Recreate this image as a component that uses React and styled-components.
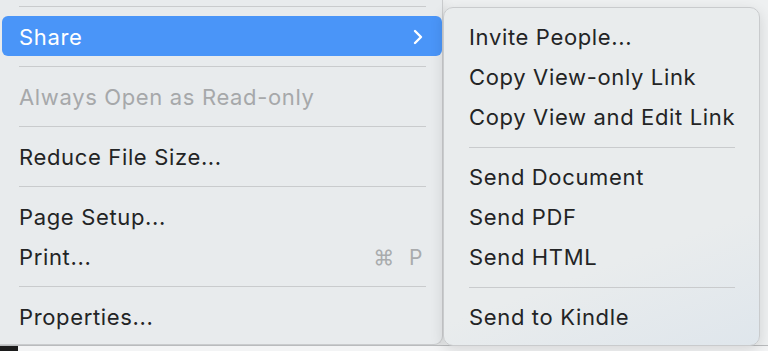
import styled, { createGlobalStyle } from 'styled-components'

const GlobalStyle = createGlobalStyle`
    html, body {
        margin: 0;
        padding: 0;
        background: #eef0f1;
        overflow: hidden;
    }
    body {
        font-family: Inter, "Noto Sans", "Liberation Sans", sans-serif;
        -webkit-font-smoothing: antialiased;
    }
`

const Screen = styled.div`
    width: 768px;
    height: 351px;
    display: flex;
    flex-direction: column;
    overflow: hidden;
`

const MenuRow = styled.div`
    display: flex;
    align-items: flex-start;
    height: 345px;
`

const Panel = styled.div`
    box-sizing: border-box;
    display: flex;
    flex-direction: column;
    background: #e8ebed;
    border: 1px solid #c9cbcd;
    box-shadow: 0 4px 14px rgba(0, 0, 0, 0.12);
`

const MainMenu = styled(Panel)`
    width: 444px;
    height: 345px;
    margin-left: -1px;
    border-top: none;
    border-left: none;
    border-radius: 0 0 9px 0;
    padding: 0 0 0 3px;
`

const SubMenu = styled(Panel)`
    width: 317px;
    height: 339px;
    margin-top: 7px;
    border-radius: 10px;
    padding-top: 9px;
    background: linear-gradient(160deg, #e9eced 0%, #e9eced 70%, #dfe6ec 100%);
    z-index: 1;
`

const Item = styled.div`
    box-sizing: border-box;
    height: 40px;
    display: flex;
    align-items: center;
    justify-content: space-between;
    padding: ${(p) => (p.$sub ? '0' : '2px')} ${(p) => (p.$sub ? '20px' : '19px')} 0
        ${(p) => (p.$sub ? '25px' : '17px')};
    font-size: 22px;
    letter-spacing: 0.65px;
    color: ${(p) => (p.$disabled ? '#a6a8aa' : p.$active ? '#ffffff' : '#232425')};
    background: ${(p) => (p.$active ? '#4a95f8' : 'transparent')};
    border-radius: 6px;
    white-space: nowrap;
`

const Separator = styled.div`
    height: 1px;
    background: #c9cbcd;
    margin: ${(p) => (p.$first ? '6px' : '10px')} ${(p) => (p.$sub ? '24px' : '16px')} 9px
        ${(p) => (p.$sub ? '25px' : '17px')};
    flex-shrink: 0;
`

const Shortcut = styled.span`
    color: #a9abad;
    font-size: 21px;
    display: flex;
    align-items: center;
    gap: 14px;
`

const Chevron = () => (
    <svg width="10" height="16" viewBox="0 0 10 16" fill="none">
        <path d="M2 2l6 6-6 6" stroke="#ffffff" strokeWidth="2.4" strokeLinecap="round" strokeLinejoin="round" />
    </svg>
)

const BottomStrip = styled.div`
    flex: 1;
    display: flex;
    border-top: 1px solid #b9bbbd;
    background: #f3f4f5;
`

const DarkBlock = styled.div`
    width: 18px;
    background: #1c1c1c;
`

export default function App() {
    return (
        <Screen>
            <GlobalStyle />
            <MenuRow>
                <MainMenu>
                    <Separator $first />
                    <Item $active>
                        <span>Share</span>
                        <Chevron />
                    </Item>
                    <Separator />
                    <Item $disabled>Always Open as Read-only</Item>
                    <Separator />
                    <Item>Reduce File Size...</Item>
                    <Separator />
                    <Item>Page Setup...</Item>
                    <Item>
                        <span>Print...</span>
                        <Shortcut>
                            <span>⌘</span>
                            <span>P</span>
                        </Shortcut>
                    </Item>
                    <Separator />
                    <Item>Properties...</Item>
                </MainMenu>
                <SubMenu>
                    <Item $sub>Invite People...</Item>
                    <Item $sub>Copy View-only Link</Item>
                    <Item $sub>Copy View and Edit Link</Item>
                    <Separator $sub />
                    <Item $sub>Send Document</Item>
                    <Item $sub>Send PDF</Item>
                    <Item $sub>Send HTML</Item>
                    <Separator $sub />
                    <Item $sub>Send to Kindle</Item>
                </SubMenu>
            </MenuRow>
            <BottomStrip>
                <DarkBlock />
            </BottomStrip>
        </Screen>
    )
}
